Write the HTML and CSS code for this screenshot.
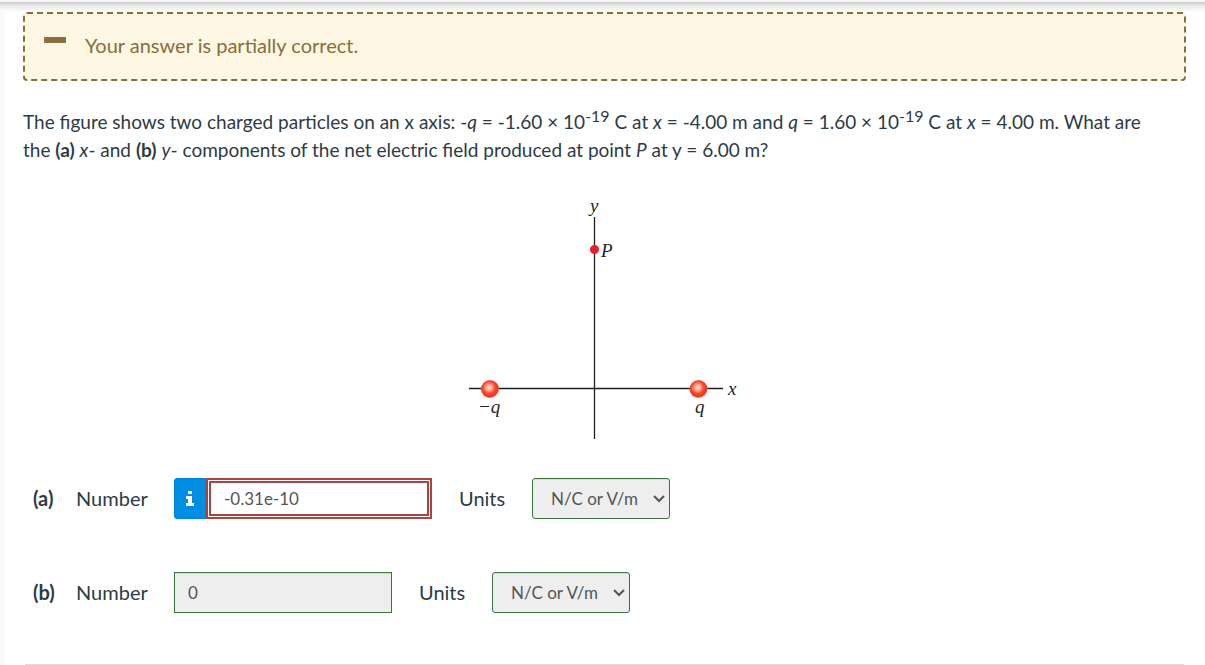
FILE: index.html
```html
<!DOCTYPE html>
<html lang="en">
<head>
  <meta charset="UTF-8">
  <meta name="viewport" content="width=device-width, initial-scale=1.0">
  <title>Electric field of two charged particles</title>
  <link rel="stylesheet" href="styles.css">
</head>
<body>
  <header class="top-bar"></header>

  <main class="question">
    <div class="feedback" role="status">
      <svg class="feedback-icon" width="22" height="6" viewBox="0 0 22 6" aria-hidden="true">
        <rect width="22" height="6" rx="1" fill="#8a6d3b"/>
      </svg>
      <span>Your answer is partially correct.</span>
    </div>

    <p class="question-text">
      The figure shows two charged particles on an x axis: -<i>q</i> = -1.60 × 10<sup>-19</sup> C at <i>x</i> = -4.00 m and <i>q</i> = 1.60 × 10<sup>-19</sup> C at <i>x</i> = 4.00 m. What are the <b>(a)</b> <i>x</i>- and <b>(b)</b> <i>y</i>- components of the net electric field produced at point <i>P</i> at y = 6.00 m?
    </p>

    <figure class="diagram">
      <svg width="290" height="260" viewBox="0 0 290 260" role="img" aria-label="Two charges on the x axis and point P on the y axis">
        <defs>
          <radialGradient id="charge" cx="0.45" cy="0.42" r="0.58">
            <stop offset="0" stop-color="#ffd9c8"/>
            <stop offset="0.3" stop-color="#ffa68c"/>
            <stop offset="0.55" stop-color="#f5503a"/>
            <stop offset="0.85" stop-color="#ef3322"/>
            <stop offset="1" stop-color="#f47a60"/>
          </radialGradient>
        </defs>
        <!-- axes -->
        <path d="M134.500 27V249M9 198.500H263" fill="none" stroke="#231f20" stroke-width="1.300"/>
        <circle cx="134.500" cy="59.500" r="4.500" fill="#ed1c24"/>
        <!-- charges -->
        <circle cx="30" cy="199" r="9" fill="url(#charge)"/>
        <circle cx="238.500" cy="199" r="9" fill="url(#charge)"/>
        <g class="diagram-labels">
          <text x="130" y="22">y</text>
          <text x="141" y="67">P</text>
          <text x="268" y="205">x</text>
          <text x="18" y="223">−q</text>
          <text x="235" y="223">q</text>
        </g>
      </svg>
    </figure>

    <form class="answers">
      <div class="answer">
        <b class="part">(a)</b>
        <label class="number-label" for="number-a">Number</label>
        <div class="number-group">
          <button class="info" type="button" aria-label="Feedback">
            <svg width="8" height="15" viewBox="0 0 8 15" aria-hidden="true">
              <path d="M2 0h4v3H2zM0 5h6v7h2v3H0v-3h2V8H0z" fill="#fff"/>
            </svg>
          </button>
          <input class="number wrong" id="number-a" type="text" value="-0.31e-10">
        </div>
        <label class="units-label" for="units-a">Units</label>
        <div class="units">
          <select id="units-a">
            <option>N/C or V/m</option>
          </select>
          <svg class="chevron" width="12" height="8" viewBox="0 0 12 8" aria-hidden="true">
            <path d="M1 1l5 5 5-5" fill="none" stroke="#555" stroke-width="2"/>
          </svg>
        </div>
      </div>

      <div class="answer">
        <b class="part">(b)</b>
        <label class="number-label" for="number-b">Number</label>
        <div class="number-group">
          <input class="number correct" id="number-b" type="text" value="0" readonly>
        </div>
        <label class="units-label" for="units-b">Units</label>
        <div class="units">
          <select id="units-b">
            <option>N/C or V/m</option>
          </select>
          <svg class="chevron" width="12" height="8" viewBox="0 0 12 8" aria-hidden="true">
            <path d="M1 1l5 5 5-5" fill="none" stroke="#555" stroke-width="2"/>
          </svg>
        </div>
      </div>
    </form>

    <hr class="divider">
  </main>
</body>
</html>
```

FILE: styles.css
```css
* {
  box-sizing: border-box;
}

body {
  margin: 0;
  background: #fff;
  color: #2d3b45;
  font-family: Lato, sans-serif;
  font-size: 20px;
  line-height: 28px;
}

.top-bar {
  height: 12px;
  border-top: 2px solid #f7f7f7;
  background: linear-gradient(#c8c8c8, #e6e6e6 30%, #fff);
}

.question {
  padding: 0 19px 0 18px;
  border-left: 5px solid #fafafa;
}

.feedback {
  display: flex;
  gap: 19px;
  padding: 17px 19px 20px;
  border: 2px dashed #8a6d3b;
  border-radius: 4px;
  background: #fdf7e3;
  color: #8a6d3b;
}

.feedback-icon {
  margin-top: 6px;
}

.question-text {
  margin: 27px 0 26px;
  padding-right: 20px;
  font-size: 19px;
}

sup {
  font-size: 16px;
  line-height: 0;
  vertical-align: baseline;
  position: relative;
  top: -7px;
}

.diagram {
  display: flex;
  justify-content: center;
  margin: 0 0 28px;
}

.diagram-labels {
  font-family: "Liberation Serif", serif;
  font-size: 19px;
  font-style: italic;
  fill: #231f20;
}

.answers {
  display: flex;
  flex-direction: column;
  gap: 53px;
  padding: 0 10px;
}

.answer {
  display: flex;
  align-items: center;
}

.part,
.number-label,
.units-label {
  padding-bottom: 2px;
}

.part {
  width: 43px;
}

.number-label {
  width: 98px;
}

.number-group {
  display: flex;
}

.info {
  display: flex;
  align-items: center;
  justify-content: center;
  width: 32px;
  padding: 0;
  border: 1px solid #0081d9;
  border-radius: 3px 0 0 3px;
  background: #008ee2;
}

.number,
select {
  height: 41px;
  margin: 0;
  color: #555;
  font-family: inherit;
  font-size: 17px;
}

.number {
  width: 218px;
  padding: 0 13px;
  border: 1px solid #3c763d;
  border-radius: 0;
  outline: none;
}

.wrong {
  width: 226px;
  border: 5px double #a94442;
}

.correct,
select {
  background: #eee;
  box-shadow: inset 0 1px 1px rgba(0, 0, 0, 0.08);
}

.units-label {
  width: 73px;
  margin-left: 27px;
}

.units {
  position: relative;
}

select {
  width: 138px;
  padding: 0 18px;
  border: 1px solid #3c763d;
  border-radius: 3px;
  appearance: none;
}

.chevron {
  position: absolute;
  top: 17px;
  right: 5px;
  pointer-events: none;
}

.divider {
  margin: 51px 2px 0;
  border: 0;
  border-top: 1px solid #ddd;
}
```
